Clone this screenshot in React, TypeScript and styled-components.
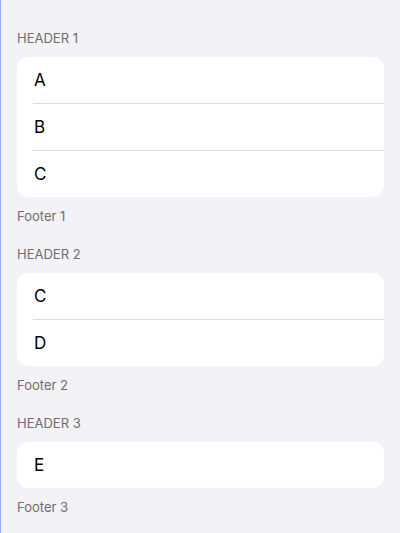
import styled, { createGlobalStyle } from 'styled-components';

const GlobalStyle = createGlobalStyle`
  html, body {
    margin: 0;
    padding: 0;
    background: #f2f2f7;
  }
  body {
    font-family: Inter, "Noto Sans", sans-serif;
    -webkit-font-smoothing: antialiased;
  }
`;

const Page = styled.div`
  min-height: 533px;
  box-sizing: border-box;
  border-left: 1px solid #8fb4f4;
  padding: 30px 16px 20px 16px;
  display: flex;
  flex-direction: column;
  gap: 22px;
`;

const Section = styled.section`
  display: flex;
  flex-direction: column;
  gap: 11px;
`;

const Caption = styled.div<{ $upper?: boolean }>`
  font-size: 13px;
  line-height: 16px;
  color: #6d6d72;
  text-transform: ${(p) => (p.$upper ? 'uppercase' : 'none')};
`;

const Card = styled.div`
  background: #ffffff;
  border-radius: 11px;
  overflow: hidden;
`;

const Row = styled.div`
  position: relative;
  height: 46px;
  display: flex;
  align-items: center;
  padding-left: 17px;
  font-size: 17px;
  color: #000000;

  & + & {
    border-top: 1px solid #dcdce0;
    margin-left: 16px;
    padding-left: 1px;
  }
`;

interface ListSectionProps {
  header: string;
  footer: string;
  items: string[];
}

function ListSection({ header, footer, items }: ListSectionProps) {
  return (
    <Section>
      <Caption $upper>{header}</Caption>
      <Card>
        {items.map((item, i) => (
          <Row key={i}>{item}</Row>
        ))}
      </Card>
      <Caption>{footer}</Caption>
    </Section>
  );
}

export default function App() {
  return (
    <>
      <GlobalStyle />
      <Page>
        <ListSection header="Header 1" footer="Footer 1" items={['A', 'B', 'C']} />
        <ListSection header="Header 2" footer="Footer 2" items={['C', 'D']} />
        <ListSection header="Header 3" footer="Footer 3" items={['E']} />
      </Page>
    </>
  );
}
